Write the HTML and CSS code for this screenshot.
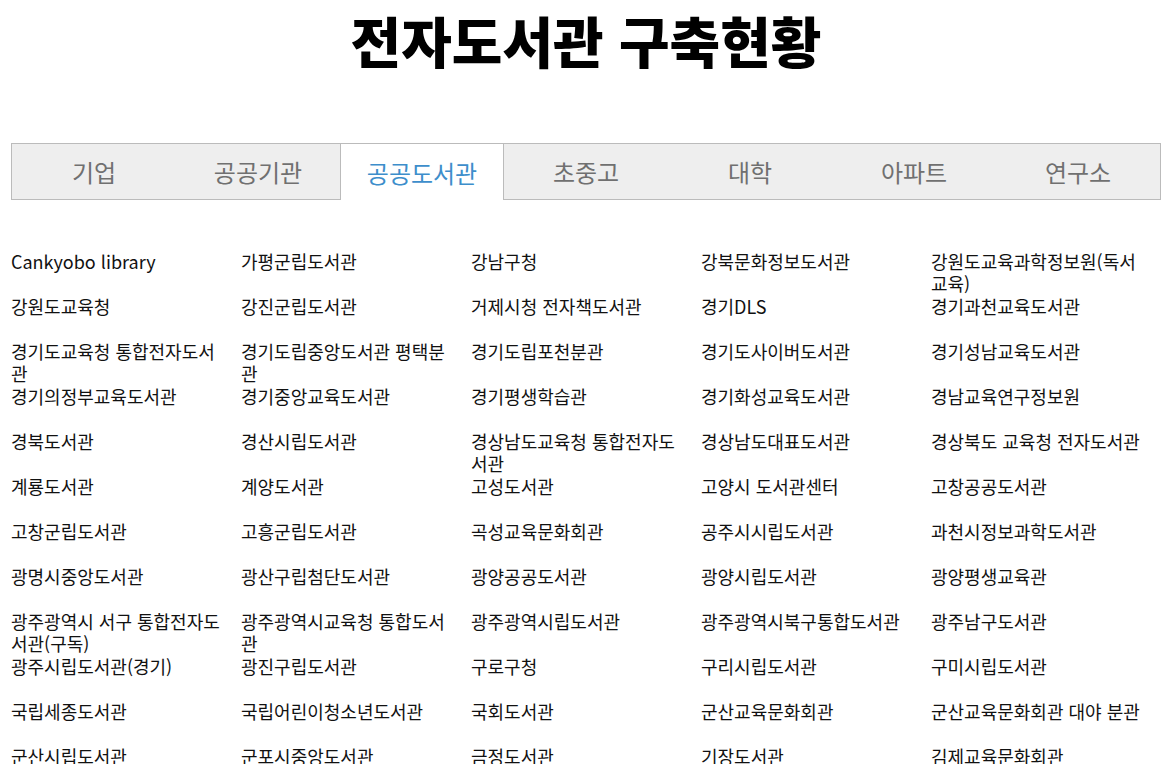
FILE: index.html
```html
<!DOCTYPE html>
<html lang="ko">
<head>
<meta charset="utf-8">
<title>전자도서관 구축현황</title>
<link rel="stylesheet" href="styles.css">
</head>
<body>
<div class="wrap">
  <h1 class="title">전자도서관 구축현황</h1>
  <ul class="tabs">
    <li class="tab">기업</li>
    <li class="tab">공공기관</li>
    <li class="tab active">공공도서관</li>
    <li class="tab">초중고</li>
    <li class="tab">대학</li>
    <li class="tab">아파트</li>
    <li class="tab">연구소</li>
  </ul>
  <ul class="list">
    <li>Cankyobo library</li>
    <li>가평군립도서관</li>
    <li>강남구청</li>
    <li>강북문화정보도서관</li>
    <li>강원도교육과학정보원(독서교육)</li>
    <li>강원도교육청</li>
    <li>강진군립도서관</li>
    <li>거제시청 전자책도서관</li>
    <li>경기DLS</li>
    <li>경기과천교육도서관</li>
    <li>경기도교육청 통합전자도서관</li>
    <li>경기도립중앙도서관 평택분관</li>
    <li>경기도립포천분관</li>
    <li>경기도사이버도서관</li>
    <li>경기성남교육도서관</li>
    <li>경기의정부교육도서관</li>
    <li>경기중앙교육도서관</li>
    <li>경기평생학습관</li>
    <li>경기화성교육도서관</li>
    <li>경남교육연구정보원</li>
    <li>경북도서관</li>
    <li>경산시립도서관</li>
    <li>경상남도교육청 통합전자도서관</li>
    <li>경상남도대표도서관</li>
    <li>경상북도 교육청 전자도서관</li>
    <li>계룡도서관</li>
    <li>계양도서관</li>
    <li>고성도서관</li>
    <li>고양시 도서관센터</li>
    <li>고창공공도서관</li>
    <li>고창군립도서관</li>
    <li>고흥군립도서관</li>
    <li>곡성교육문화회관</li>
    <li>공주시시립도서관</li>
    <li>과천시정보과학도서관</li>
    <li>광명시중앙도서관</li>
    <li>광산구립첨단도서관</li>
    <li>광양공공도서관</li>
    <li>광양시립도서관</li>
    <li>광양평생교육관</li>
    <li>광주광역시 서구 통합전자도서관(구독)</li>
    <li>광주광역시교육청 통합도서관</li>
    <li>광주광역시립도서관</li>
    <li>광주광역시북구통합도서관</li>
    <li>광주남구도서관</li>
    <li>광주시립도서관(경기)</li>
    <li>광진구립도서관</li>
    <li>구로구청</li>
    <li>구리시립도서관</li>
    <li>구미시립도서관</li>
    <li>국립세종도서관</li>
    <li>국립어린이청소년도서관</li>
    <li>국회도서관</li>
    <li>군산교육문화회관</li>
    <li>군산교육문화회관 대야 분관</li>
    <li>군산시립도서관</li>
    <li>군포시중앙도서관</li>
    <li>금정도서관</li>
    <li>기장도서관</li>
    <li>김제교육문화회관</li>
  </ul>
</div>
</body>
</html>
```
FILE: styles.css
```css
html, body {
  margin: 0;
  padding: 0;
  background: #fff;
}
body {
  font-family: "Noto Sans CJK KR", "Noto Sans", sans-serif;
  color: #111;
}
.wrap {
  width: 1150px;
  margin-left: 11px;
}
.title {
  margin: 0;
  text-align: center;
  font-size: 55px;
  font-weight: 900;
  line-height: 78px;
  color: #000;
}
.tabs {
  list-style: none;
  margin: 65px 0 0;
  padding: 0;
  display: flex;
  border: 1px solid #bbb;
  background: #eee;
  height: 55px;
}
.tab {
  flex: 1;
  display: flex;
  align-items: center;
  justify-content: center;
  font-size: 24px;
  color: #707070;
  border-left: 1px solid transparent;
  border-right: 1px solid transparent;
}
.tab.active {
  background: #fff;
  color: #3d8ecb;
  border-left-color: #bbb;
  border-right-color: #bbb;
  margin-bottom: -1px;
  height: 56px;
}
.list {
  list-style: none;
  margin: 50px 0 0;
  padding: 0;
  display: grid;
  grid-template-columns: repeat(5, 230px);
  grid-auto-rows: 45px;
}
.list li {
  font-size: 18px;
  line-height: 22px;
  padding-right: 20px;
}
```
